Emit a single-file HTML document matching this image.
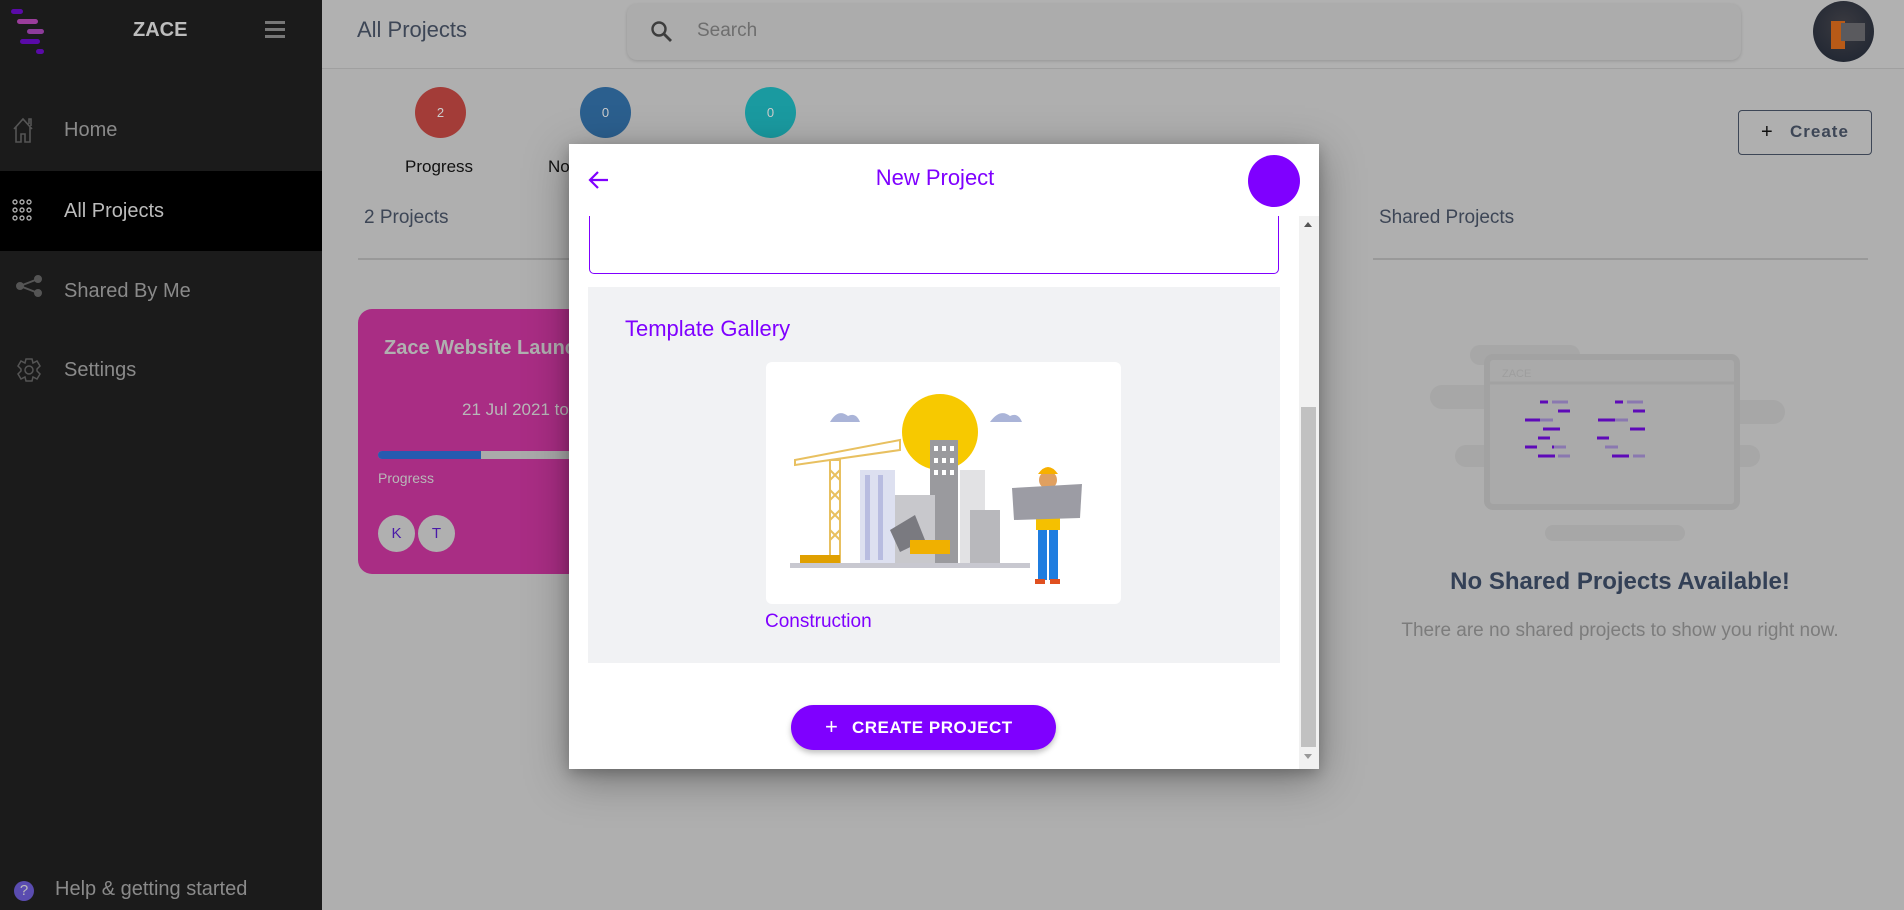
<!DOCTYPE html>
<html><head><meta charset="utf-8"><style>
*{margin:0;padding:0;box-sizing:border-box}
body{width:1904px;height:910px;overflow:hidden;background:#afafaf;font-family:"Liberation Sans",sans-serif;position:relative}
.a{position:absolute}
#side{left:0;top:0;width:322px;height:910px;background:#1b1b1b}
.nav{left:0;width:322px;height:80px;color:#8a8a8a;font-size:20px;line-height:80px;padding-left:64px}
.t{white-space:nowrap}
</style></head><body>
<div id="side" class="a">
  <div class="a" style="left:11px;top:9px;width:12px;height:5px;background:#5a0aa8;border-radius:3px"></div>
  <div class="a" style="left:17px;top:19px;width:21px;height:5px;background:#9b3d9b;border-radius:3px"></div>
  <div class="a" style="left:27px;top:29px;width:17px;height:5px;background:#8d3c9a;border-radius:3px"></div>
  <div class="a" style="left:20px;top:39px;width:20px;height:5px;background:#5a0aa8;border-radius:3px"></div>
  <div class="a" style="left:36px;top:49px;width:8px;height:5px;background:#5a0aa8;border-radius:3px"></div>
  <div class="a t" style="left:133px;top:19px;font-size:20px;font-weight:bold;color:#bdbdbd">ZACE</div>
  <div class="a" style="left:265px;top:21px;width:20px;height:3px;background:#777;box-shadow:0 7px 0 #777,0 14px 0 #777"></div>
  <div class="a nav t" style="top:90px">Home</div>
  <svg class="a" style="left:12px;top:116px" width="22" height="28" viewBox="0 0 22 28"><path d="M2 13 L11 3 L20 13 M4 11 V26 H9 V18 H13 V26 H18 V11 M17 8 V3 H19 V10" fill="none" stroke="#555" stroke-width="1.6"/></svg>
  <div class="a nav t" style="top:171px;background:#000;color:#bcbcbc">All Projects</div>
  <svg class="a" style="left:12px;top:198px" width="20" height="24"><g fill="none" stroke="#aaa" stroke-width="1.4"><circle cx="3" cy="4" r="2"/><circle cx="10" cy="4" r="2"/><circle cx="17" cy="4" r="2"/><circle cx="3" cy="12" r="2"/><circle cx="10" cy="12" r="2"/><circle cx="17" cy="12" r="2"/><circle cx="3" cy="20" r="2"/><circle cx="10" cy="20" r="2"/><circle cx="17" cy="20" r="2"/></g></svg>
  <div class="a nav t" style="top:251px">Shared By Me</div>
  <svg class="a" style="left:16px;top:275px" width="26" height="22"><g fill="#555" stroke="#555" stroke-width="2"><circle cx="22" cy="4" r="3"/><circle cx="4" cy="11" r="3"/><circle cx="22" cy="18" r="3"/><path d="M22 4 L4 11 L22 18" fill="none"/></g></svg>
  <div class="a nav t" style="top:330px">Settings</div>
  <svg class="a" style="left:16px;top:358px" width="26" height="24" viewBox="0 0 26 24"><path d="M10 1 H16 L17 5 L21 3 L24 8 L21 11 V13 L24 16 L21 21 L17 19 L16 23 H10 L9 19 L5 21 L2 16 L5 13 V11 L2 8 L5 3 L9 5 Z" fill="none" stroke="#555" stroke-width="1.5"/><circle cx="13" cy="12" r="4" fill="none" stroke="#555" stroke-width="1.5"/></svg>
  <div class="a" style="left:14px;top:881px;width:20px;height:20px;border-radius:50%;background:#5a4cb0;color:#bbb;font-size:15px;text-align:center;line-height:20px">?</div>
  <div class="a t" style="left:55px;top:878px;font-size:20px;color:#8a8a8a">Help &amp; getting started</div>
</div>

<div class="a" style="left:322px;top:0;width:1582px;height:69px;background:#b1b1b1;border-bottom:1px solid #a0a0a0"></div>
<div class="a t" style="left:357px;top:17px;font-size:22px;color:#3d4656">All Projects</div>
<div class="a" style="left:627px;top:4px;width:1114px;height:56px;border-radius:10px;background:#acacac;box-shadow:0 1px 3px rgba(0,0,0,.15)"></div>
<svg class="a" style="left:650px;top:20px" width="24" height="24"><circle cx="9" cy="9" r="6.5" fill="none" stroke="#3d3d3d" stroke-width="2.4"/><path d="M14 14 L21 21" stroke="#3d3d3d" stroke-width="2.8"/></svg>
<div class="a t" style="left:697px;top:20px;font-size:19px;color:#6e6e6e">Search</div>
<div class="a" style="left:1813px;top:1px;width:61px;height:61px;border-radius:50%;background:radial-gradient(circle at 50% 40%,#3a3a40,#1c2330);overflow:hidden"><div class="a" style="left:18px;top:20px;width:14px;height:28px;background:#b85a17"></div><div class="a" style="left:28px;top:22px;width:24px;height:18px;background:#5a5a5e"></div></div>

<div class="a" style="left:415px;top:87px;width:51px;height:51px;border-radius:50%;background:#a33c38;color:#ccc;font-size:13px;text-align:center;line-height:51px">2</div>
<div class="a" style="left:580px;top:87px;width:51px;height:51px;border-radius:50%;background:#2b5f8e;color:#ccc;font-size:13px;text-align:center;line-height:51px">0</div>
<div class="a" style="left:745px;top:87px;width:51px;height:51px;border-radius:50%;background:#1a9aa0;color:#ccc;font-size:13px;text-align:center;line-height:51px">0</div>
<div class="a t" style="left:405px;top:157px;font-size:17px;color:#111">Progress</div>
<div class="a t" style="left:548px;top:157px;font-size:17px;color:#111">No</div>
<div class="a" style="left:1738px;top:110px;width:134px;height:45px;border:1.5px solid #3d4656;border-radius:4px"></div>
<div class="a t" style="left:1761px;top:121px;font-size:20px;color:#111">+</div>
<div class="a t" style="left:1790px;top:122px;font-size:17px;font-weight:bold;color:#3d4656;letter-spacing:1px">Create</div>
<div class="a t" style="left:364px;top:207px;font-size:19px;color:#3d4656">2 Projects</div>
<div class="a" style="left:358px;top:258px;width:220px;height:2px;background:#999"></div>
<div class="a t" style="left:1379px;top:207px;font-size:19px;color:#3d4656">Shared Projects</div>
<div class="a" style="left:1373px;top:258px;width:495px;height:2px;background:#999"></div>

<div class="a" style="left:358px;top:309px;width:240px;height:265px;background:#a92d84;border-radius:14px"></div>
<div class="a t" style="left:384px;top:337px;font-size:20px;font-weight:bold;color:#b0b0b0">Zace Website Launch</div>
<div class="a t" style="left:462px;top:400px;font-size:17px;color:#b8b8b8">21 Jul 2021 to</div>
<div class="a" style="left:378px;top:451px;width:220px;height:8px;background:#aaa;border-radius:4px"></div>
<div class="a" style="left:378px;top:451px;width:103px;height:8px;background:#265bb0;border-radius:4px 0 0 4px"></div>
<div class="a t" style="left:378px;top:470px;font-size:14px;color:#b8b8b8">Progress</div>
<div class="a" style="left:378px;top:515px;width:37px;height:37px;border-radius:50%;background:#b0b0b0;color:#4a1aa8;text-align:center;line-height:37px;font-size:15px">K</div>
<div class="a" style="left:418px;top:515px;width:37px;height:37px;border-radius:50%;background:#b0b0b0;color:#4a1aa8;text-align:center;line-height:37px;font-size:15px">T</div>

<svg class="a" style="left:1430px;top:345px" width="360" height="200" viewBox="0 0 360 200">
<g fill="#a7a7a7"><rect x="40" y="0" width="110" height="20" rx="10"/><rect x="0" y="40" width="120" height="24" rx="12"/><rect x="210" y="55" width="145" height="24" rx="12"/><rect x="25" y="100" width="90" height="22" rx="11"/><rect x="230" y="100" width="100" height="22" rx="11"/><rect x="115" y="180" width="140" height="16" rx="8"/></g>
<rect x="57" y="12" width="250" height="150" rx="6" fill="#aaaaaa" stroke="#a2a2a2" stroke-width="6"/>
<line x1="60" y1="38" x2="304" y2="38" stroke="#a2a2a2" stroke-width="3"/>
<text x="72" y="32" font-size="11" fill="#9e9e9e" font-family="Liberation Sans">ZACE</text>
<g stroke-width="3"><g stroke="#5e0ab8"><line x1="110" y1="57" x2="118" y2="57"/><line x1="185" y1="57" x2="193" y2="57"/><line x1="128" y1="66" x2="140" y2="66"/><line x1="203" y1="66" x2="215" y2="66"/><line x1="95" y1="75" x2="112" y2="75"/><line x1="168" y1="75" x2="185" y2="75"/><line x1="113" y1="84" x2="130" y2="84"/><line x1="200" y1="84" x2="215" y2="84"/><line x1="108" y1="93" x2="120" y2="93"/><line x1="167" y1="93" x2="179" y2="93"/><line x1="95" y1="102" x2="107" y2="102"/><line x1="122" y1="102" x2="135" y2="102"/><line x1="108" y1="111" x2="125" y2="111"/><line x1="182" y1="111" x2="199" y2="111"/></g><g stroke="#8a78b0"><line x1="122" y1="57" x2="138" y2="57"/><line x1="197" y1="57" x2="213" y2="57"/><line x1="110" y1="75" x2="123" y2="75"/><line x1="185" y1="75" x2="198" y2="75"/><line x1="124" y1="102" x2="136" y2="102"/><line x1="175" y1="102" x2="188" y2="102"/><line x1="128" y1="111" x2="140" y2="111"/><line x1="203" y1="111" x2="215" y2="111"/></g></g>
</svg>
<div class="a t" style="left:0;width:3240px;text-align:center;top:568px;font-size:24px;font-weight:bold;color:#334056">No Shared Projects Available!</div>
<div class="a t" style="left:0;width:3240px;text-align:center;top:620px;font-size:19px;color:#7c7c7c">There are no shared projects to show you right now.</div>

<div class="a" style="left:569px;top:144px;width:750px;height:625px;background:#fff;box-shadow:0 10px 40px rgba(0,0,0,.35),0 4px 12px rgba(0,0,0,.2)"></div>
<svg class="a" style="left:588px;top:170px" width="22" height="20"><path d="M10 2 L2 10 L10 18 M2 10 H20" fill="none" stroke="#7f00ff" stroke-width="2.2"/></svg>
<div class="a t" style="left:0;width:1870px;text-align:center;top:165px;font-size:22px;color:#7f00ff">New Project</div>
<div class="a" style="left:1248px;top:155px;width:52px;height:52px;border-radius:50%;background:#7f00ff"></div>
<div class="a" style="left:1299px;top:216px;width:20px;height:553px;background:#f1f1f1"></div>
<div class="a" style="left:1301px;top:407px;width:15px;height:340px;background:#c1c1c1"></div>
<div class="a" style="left:1304px;top:222px;width:0;height:0;border-left:4px solid transparent;border-right:4px solid transparent;border-bottom:5px solid #555"></div>
<div class="a" style="left:1304px;top:754px;width:0;height:0;border-left:4px solid transparent;border-right:4px solid transparent;border-top:5px solid #999"></div>
<div class="a" style="left:589px;top:216px;width:690px;height:58px;border:1.5px solid #7f00ff;border-top:none;border-radius:0 0 5px 5px"></div>
<div class="a" style="left:588px;top:287px;width:692px;height:376px;background:#f1f2f4"></div>
<div class="a t" style="left:625px;top:316px;font-size:22px;color:#7f00ff">Template Gallery</div>
<div class="a" style="left:766px;top:362px;width:355px;height:242px;background:#fff;border-radius:6px"></div>
<svg class="a" style="left:790px;top:380px" width="300" height="210" viewBox="0 0 300 210">
<circle cx="150" cy="52" r="38" fill="#f7c900"/>
<g fill="#aab4d8"><path d="M40 42 Q48 28 58 36 Q66 32 70 42 Z"/><path d="M200 42 Q210 28 220 36 Q228 32 232 42 Z"/></g>
<g fill="none" stroke="#e8c060" stroke-width="2"><path d="M5 80 L110 60 L110 70 L5 85 Z"/><rect x="40" y="80" width="10" height="105"/><path d="M40 90 L50 100 M50 90 L40 100 M40 110 L50 120 M50 110 L40 120 M40 130 L50 140 M50 130 L40 140 M40 150 L50 160 M50 150 L40 160"/></g>
<rect x="70" y="90" width="35" height="95" fill="#dde0f0"/><rect x="75" y="95" width="5" height="85" fill="#b8bce0"/><rect x="88" y="95" width="5" height="85" fill="#b8bce0"/>
<rect x="140" y="60" width="28" height="125" fill="#9a9a9e"/>
<g fill="#fff"><rect x="144" y="66" width="4" height="5"/><rect x="152" y="66" width="4" height="5"/><rect x="160" y="66" width="4" height="5"/><rect x="144" y="78" width="4" height="5"/><rect x="152" y="78" width="4" height="5"/><rect x="160" y="78" width="4" height="5"/><rect x="144" y="90" width="4" height="5"/><rect x="152" y="90" width="4" height="5"/><rect x="160" y="90" width="4" height="5"/></g>
<rect x="105" y="115" width="40" height="70" fill="#c8c8cc"/><rect x="170" y="90" width="25" height="95" fill="#e2e2e4"/><rect x="180" y="130" width="30" height="55" fill="#b8b8bc"/>
<path d="M100 150 L125 135 L135 160 L110 172 Z" fill="#7a7a80"/><rect x="120" y="160" width="40" height="14" fill="#f0b000"/>
<rect x="10" y="175" width="40" height="10" fill="#e0a000"/>
<rect x="0" y="183" width="240" height="5" fill="#c8c8d0"/>
<circle cx="258" cy="100" r="9" fill="#e0a060"/><path d="M248 94 Q258 80 268 94 Z" fill="#f7b000"/>
<rect x="246" y="110" width="24" height="40" fill="#f5c000"/>
<rect x="248" y="150" width="9" height="50" fill="#1f7de0"/><rect x="259" y="150" width="9" height="50" fill="#1f7de0"/>
<path d="M222 108 L292 104 L290 138 L224 140 Z" fill="#9c9ca4"/>
<rect x="245" y="199" width="10" height="5" fill="#e05020"/><rect x="260" y="199" width="10" height="5" fill="#e05020"/>
</svg>
<div class="a t" style="left:765px;top:611px;font-size:19px;color:#7f00ff">Construction</div>
<div class="a" style="left:791px;top:705px;width:265px;height:45px;border-radius:23px;background:#7f00ff;box-shadow:0 3px 6px rgba(0,0,0,.25)"></div>
<div class="a t" style="left:825px;top:714px;font-size:22px;color:#fff;font-weight:300">+</div>
<div class="a t" style="left:852px;top:718px;font-size:17px;color:#fff;font-weight:bold;letter-spacing:.5px">CREATE PROJECT</div>
</body></html>
